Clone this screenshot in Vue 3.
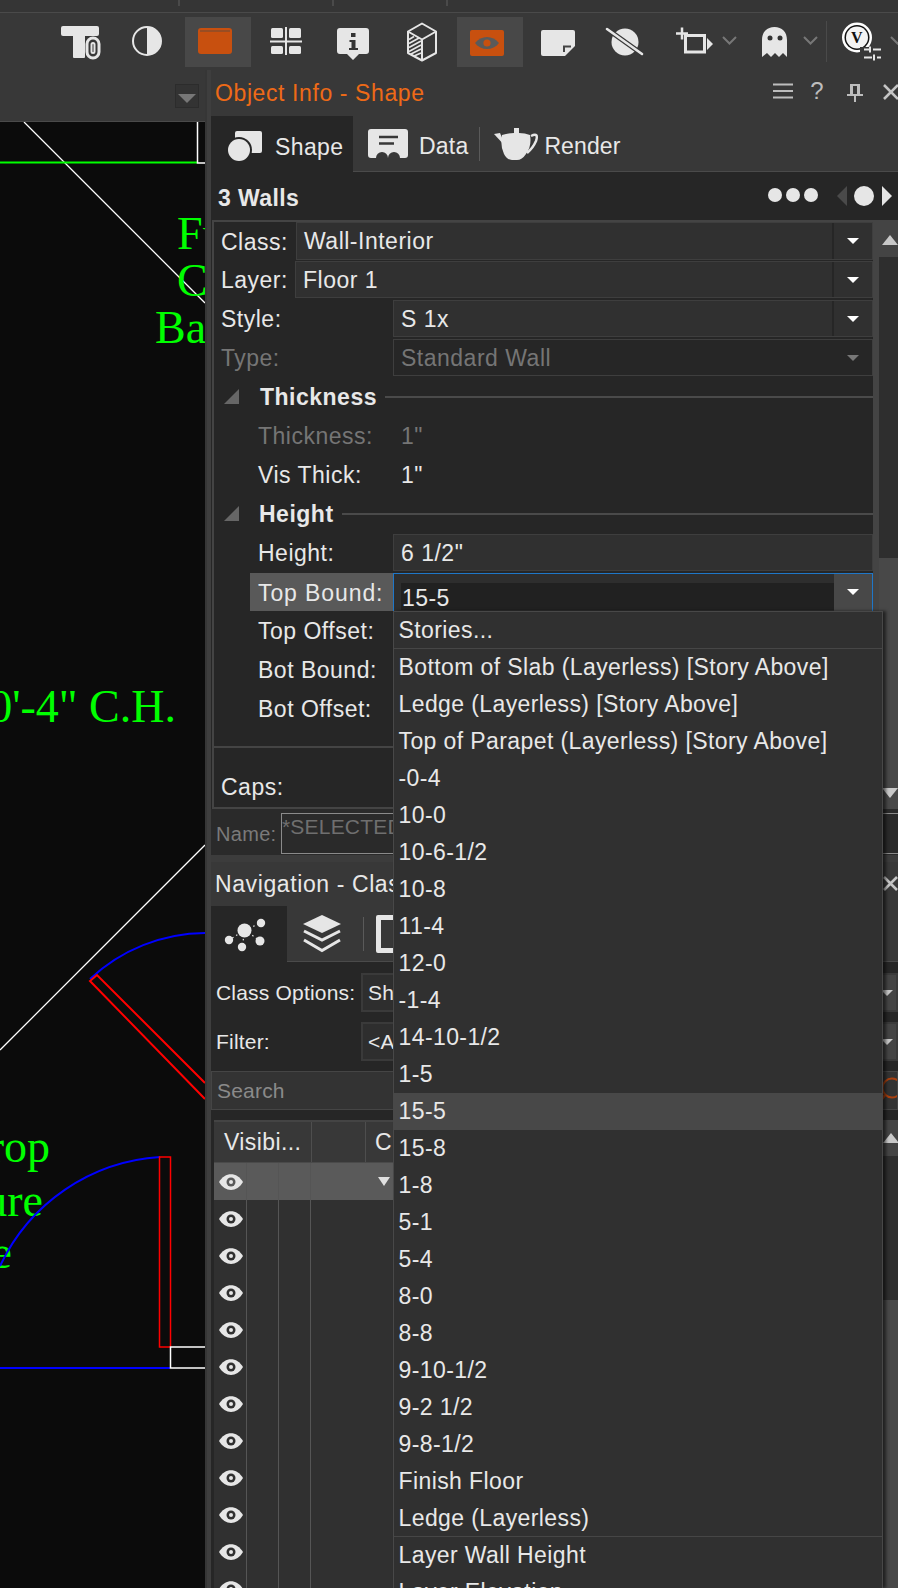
<template>
  <div class="app">
    <div class="top-strip">
      <i style="left: 178px"></i>
      <i style="left: 332px"></i>
      <i style="left: 446px"></i>
    </div>

    <div class="toolbar">
      <div class="tool">
        <svg viewBox="49 17 66 50">
          <rect x="61" y="26" width="38" height="10" rx="2" fill="#e6e6e6" />
          <rect x="73" y="34" width="12" height="24" rx="1" fill="#e6e6e6" />
          <rect x="87" y="38" width="12" height="20" rx="6" fill="#383838" stroke="#e6e6e6" stroke-width="3" />
          <rect x="91.5" y="43" width="3" height="10" rx="1.5" fill="none" stroke="#e6e6e6" stroke-width="2" />
        </svg>
      </div>
      <div class="tool">
        <svg viewBox="117 17 66 50">
          <circle cx="147" cy="41" r="14" fill="none" stroke="#e6e6e6" stroke-width="2" />
          <path d="M147 27A14 14 0 0 1 147 55Z" fill="#e6e6e6" />
        </svg>
      </div>
      <div class="tool on">
        <svg viewBox="185 17 66 50">
          <rect x="198" y="28" width="34" height="26" rx="3" fill="#c8500f" />
          <path d="M200 31H230" stroke="#6b4a38" stroke-width="1" />
        </svg>
      </div>
      <div class="tool">
        <svg viewBox="253 17 66 50">
          <rect x="271" y="28" width="12" height="10" rx="1.5" fill="#e6e6e6" />
          <rect x="289" y="28" width="12" height="10" rx="1.5" fill="#e6e6e6" />
          <rect x="271" y="46" width="12" height="8" rx="1.5" fill="#e6e6e6" />
          <rect x="289" y="46" width="12" height="8" rx="1.5" fill="#e6e6e6" />
          <path d="M270 41.5H302M286 27V55" stroke="#e6e6e6" stroke-width="2" />
        </svg>
      </div>
      <div class="tool">
        <svg viewBox="321 17 66 50">
          <path d="M340 28H366a3 3 0 0 1 3 3V51a3 3 0 0 1-3 3H359L353 60 347 54H340a3 3 0 0 1-3-3V31a3 3 0 0 1 3-3Z" fill="#e6e6e6" />
          <rect x="351" y="33" width="4.5" height="4" fill="#333" />
          <path d="M349.500 40H355.500V48H358V50H349V48H351.500V42H349.500Z" fill="#333" />
        </svg>
      </div>
      <div class="tool">
        <svg viewBox="389 17 66 50">
          <path d="M422 23.500L436 31.500V53L422 60.500 408 53V31.500ZM408 31.500L422 39.500 436 31.500M422 39.500V60.500" fill="none" stroke="#e6e6e6" stroke-width="2" stroke-linejoin="round" />
          <path d="M409 39.500L414 36.500M409 43.500L419 38M409 47.500L421 41M409 51.500L421 45M411 54L421 49M414 56L421 53" stroke="#e6e6e6" stroke-width="1.700" />
        </svg>
      </div>
      <div class="tool on">
        <svg viewBox="457 17 66 50">
          <rect x="470" y="30" width="34" height="26" rx="2" fill="#c8500f" />
          <path d="M475 43C481 35 493 35 499 43 493 51 481 51 475 43Z" fill="#5a5a5a" />
          <circle cx="487" cy="43" r="3.600" fill="#c8500f" />
        </svg>
      </div>
      <div class="tool">
        <svg viewBox="525 17 66 50">
          <path d="M543 30H573a2 2 0 0 1 2 2V46L565 56H543a2 2 0 0 1-2-2V32a2 2 0 0 1 2-2Z" fill="#e6e6e6" />
          <path d="M564 52V46.500H571" fill="none" stroke="#444" stroke-width="2" />
        </svg>
      </div>
      <div class="tool">
        <svg viewBox="593 17 66 50">
          <circle cx="625" cy="42" r="13.500" fill="#e6e6e6" />
          <path d="M607 29L642 54" stroke="#383838" stroke-width="5" />
          <path d="M607 29L642 54" stroke="#e6e6e6" stroke-width="2.600" stroke-linecap="round" />
        </svg>
      </div>
      <div class="tool wide-a">
        <svg viewBox="661 17 84 50">
          <path d="M676 33.500H688M682 27.500V39.500" stroke="#e6e6e6" stroke-width="2.500" />
          <rect x="685.500" y="35.500" width="19" height="16.500" fill="none" stroke="#e6e6e6" stroke-width="3" />
          <path d="M707 38L713 44 707 50Z" fill="#e6e6e6" />
          <path d="M723 37L729.500 43.500 736 37" fill="none" stroke="#777" stroke-width="2" />
        </svg>
      </div>
      <div class="tool wide-b">
        <svg viewBox="745 17 81 50">
          <path d="M762 57V40C762 32 767 27 774.500 27S787 32 787 40V57L783 53 779 57 775 53 771 57 767 53Z" fill="#e6e6e6" />
          <circle cx="770" cy="38" r="2.500" fill="#333" />
          <circle cx="780" cy="38" r="2.500" fill="#333" />
          <path d="M804 37L810.500 43.500 817 37" fill="none" stroke="#777" stroke-width="2" />
        </svg>
      </div>
      <div class="tool-sep"></div>
      <div class="tool wide-c">
        <svg viewBox="827 17 71 50">
          <circle cx="857" cy="37.500" r="15" fill="#fff" />
          <circle cx="857" cy="37.500" r="12.500" fill="#111" />
          <circle cx="857" cy="37.500" r="11" fill="#f4f4f4" />
          <text x="857" y="43" text-anchor="middle" class="logo-v">V</text>
          <path d="M860 49.500H882M860 57.500H882" stroke="#383838" stroke-width="5" />
          <path d="M864 49.500H869M873 49.500H881M864 57.500H872M877 57.500H881M870 46.500V52.500M874 54.500V60.500" stroke="#e6e6e6" stroke-width="2" />
          <path d="M891 37L897.500 43.500 904 37" fill="none" stroke="#777" stroke-width="2" />
        </svg>
      </div>
    </div>

    <div class="main">
      <div class="left">
        <div class="left-head">
          <div class="head-btn"><span class="head-tri"></span></div>
        </div>
        <div class="canvas">
          <svg class="drawing" viewBox="0 122 205 1466">
            <path d="M24 122L205 303M205 845L0 1050" stroke="#fff" stroke-width="1.300" fill="none" />
            <path d="M0 162.500H197" stroke="#00ff00" stroke-width="2" />
            <path d="M197.500 122V163H205" stroke="#fff" stroke-width="1.500" fill="none" />
            <text x="177" y="249" class="cad">Fu</text>
            <text x="177" y="296" class="cad">Cl</text>
            <text x="155" y="343" class="cad">Ba</text>
            <text x="176" y="722" text-anchor="end" class="cad">10'-4" C.H.</text>
            <text x="50" y="1162" text-anchor="end" class="cad">rop</text>
            <text x="43" y="1216" text-anchor="end" class="cad">ure</text>
            <text x="12" y="1268" text-anchor="end" class="cad">e</text>
            <path d="M90 979A170 170 0 0 1 205 933" stroke="#0000ff" stroke-width="2" fill="none" />
            <path d="M205 1099L90 981 97 975 205 1083" stroke="#ff0000" stroke-width="2" fill="none" />
            <path d="M0 1266A190 190 0 0 1 160 1157" stroke="#0000ff" stroke-width="2" fill="none" />
            <rect x="159.500" y="1157" width="11" height="190" stroke="#ff0000" stroke-width="1.500" fill="none" />
            <path d="M0 1368H170" stroke="#0000ff" stroke-width="2" />
            <path d="M205 1347H170.500V1368H205" stroke="#fff" stroke-width="1.500" fill="none" />
          </svg>
        </div>
      </div>

      <div class="splitter"></div>

      <div class="right">
        <div class="titlebar">
          <span class="title orange">Object Info - Shape</span>
          <svg class="win-icons" viewBox="760 70 138 46">
            <path d="M773 84.500H793M773 91H793M773 97.500H793" stroke="#bdbdbd" stroke-width="1.800" />
            <text x="817" y="99" text-anchor="middle" class="help">?</text>
            <path d="M850 84H860V94H863V96H847V94H850ZM853 86V94H857V86ZM854 96H856V102H854Z" fill="#bdbdbd" fill-rule="evenodd" />
            <path d="M884 85L898 99M898 85L884 99" stroke="#c4c4c4" stroke-width="2.600" />
          </svg>
        </div>

        <div class="tabs">
          <div class="tab active shape-tab">
            <svg width="40" height="36" viewBox="224 125 40 36">
              <rect x="235" y="130" width="27" height="22" rx="2" fill="#e6e6e6" />
              <circle cx="239" cy="149" r="13" fill="#262626" />
              <circle cx="239" cy="149" r="11" fill="#e6e6e6" />
            </svg>
            <span>Shape</span>
          </div>
          <div class="tab data-tab">
            <svg width="42" height="32" viewBox="367 129 42 32">
              <path d="M371 130H405a3 3 0 0 1 3 3V156a3 3 0 0 1-3 3H400a6 6 0 0 0-12 0H388a6 6 0 0 0-12 0H371a3 3 0 0 1-3-3V133a3 3 0 0 1 3-3Z" fill="#e6e6e6" />
              <path d="M379 138H398M379 144.500H394" stroke="#383838" stroke-width="2.500" />
            </svg>
            <span>Data</span>
          </div>
          <div class="tab-sep"></div>
          <div class="tab render-tab">
            <svg width="46" height="36" viewBox="492 126 46 36">
              <path d="M493 134L499 133 505 147Z" fill="#e6e6e6" />
              <path d="M501 135Q507 133 513 133V128H518V133Q524 133 529 135Q531 146 525 154Q521 160 516 160H511Q506 160 503 154Q499 146 501 135Z" fill="#e6e6e6" />
              <path d="M530 136Q538 132 535 141Q532 148 526 153" fill="none" stroke="#e6e6e6" stroke-width="2.500" />
            </svg>
            <span>Render</span>
          </div>
        </div>

        <div class="selection">
          <b>3 Walls</b>
          <svg viewBox="760 175 138 40" class="sel-icons">
            <circle cx="775" cy="195" r="7" fill="#e6e6e6" />
            <circle cx="793" cy="195" r="7" fill="#e6e6e6" />
            <circle cx="811" cy="195" r="7" fill="#e6e6e6" />
            <path d="M847 186V206L837 196Z" fill="#4a4a4a" />
            <circle cx="864" cy="196" r="10" fill="#e6e6e6" />
            <path d="M882 186L892 196 882 206Z" fill="#e6e6e6" />
          </svg>
        </div>

        <div class="info">
          <div class="fields">
            <div class="row first">
              <span class="lab lab-class">Class:</span>
              <div class="field"><span class="field-text">Wall-Interior</span><span class="drop"><span class="tri"></span></span></div>
            </div>
            <div class="row">
              <span class="lab lab-layer">Layer:</span>
              <div class="field"><span class="field-text">Floor 1</span><span class="drop"><span class="tri"></span></span></div>
            </div>
            <div class="row">
              <span class="lab lab-wide">Style:</span>
              <div class="field"><span class="field-text">S 1x</span><span class="drop"><span class="tri"></span></span></div>
            </div>
            <div class="row">
              <span class="lab lab-wide muted">Type:</span>
              <div class="field off"><span class="field-text muted">Standard Wall</span><span class="drop"><span class="tri dim"></span></span></div>
            </div>

            <div class="row section">
              <svg class="corner" viewBox="0 0 15 15"><path d="M15 0V15H0Z" fill="#666" /></svg>
              <b>Thickness</b>
              <i></i>
            </div>
            <div class="row sub">
              <span class="lab lab-sub muted">Thickness:</span>
              <span class="value muted">1"</span>
            </div>
            <div class="row sub">
              <span class="lab lab-sub">Vis Thick:</span>
              <span class="value">1"</span>
            </div>

            <div class="row section">
              <svg class="corner" viewBox="0 0 15 15"><path d="M15 0V15H0Z" fill="#666" /></svg>
              <b class="tight">Height</b>
              <i></i>
            </div>
            <div class="row sub">
              <span class="lab lab-sub">Height:</span>
              <div class="field"><span class="field-text">6 1/2"</span></div>
            </div>
            <div class="row sub bound">
              <span class="lab lab-hi">Top Bound:</span>
              <div class="combo">
                <div class="combo-in">15-5</div>
                <span class="combo-btn"><span class="tri"></span></span>
              </div>
            </div>
            <div class="row sub"><span class="lab lab-sub">Top Offset:</span></div>
            <div class="row sub"><span class="lab lab-sub">Bot Bound:</span></div>
            <div class="row sub"><span class="lab lab-sub">Bot Offset:</span></div>

            <div class="caps">
              <span class="lab">Caps:</span>
            </div>
          </div>
          <div class="scroll">
            <div class="scroll-btn"><span class="arrow up"></span></div>
            <div class="scroll-track"></div>
            <div class="scroll-thumb"><span class="arrow down"></span></div>
          </div>
        </div>

        <div class="name-row">
          <span class="name-lab">Name:</span>
          <div class="name-box">*SELECTED</div>
        </div>
        <div class="gap-strip"></div>

        <div class="titlebar nav-title">
          <span class="title">Navigation - Classes</span>
          <svg class="nav-x" viewBox="0 0 15 15"><path d="M1 1L14 14M14 1L1 14" stroke="#c4c4c4" stroke-width="2.600" /></svg>
        </div>

        <div class="tabs nav-tabs">
          <div class="tab active net-tab">
            <svg width="50" height="44" viewBox="220 912 50 44">
              <path d="M245 930L261 923M245 930L229 940M245 930L260 941M245 930L242 947" stroke="#e6e6e6" stroke-width="1.200" stroke-dasharray="1.500 3" />
              <circle cx="244.500" cy="930.500" r="7" fill="#e6e6e6" />
              <circle cx="261" cy="923" r="4.200" fill="#e6e6e6" />
              <circle cx="229" cy="940" r="4.200" fill="#e6e6e6" />
              <circle cx="260" cy="941" r="4.500" fill="#e6e6e6" />
              <circle cx="242" cy="947" r="4.200" fill="#e6e6e6" />
            </svg>
          </div>
          <div class="tab layers-tab">
            <svg width="40" height="40" viewBox="302 915 40 40">
              <path d="M322 916L341 925 322 934 303 925Z" fill="#e6e6e6" />
              <path d="M304 932L322 941 340 932" fill="none" stroke="#e6e6e6" stroke-width="3" />
              <path d="M304 941L322 951.500 340 941" fill="none" stroke="#e6e6e6" stroke-width="3" />
            </svg>
          </div>
          <div class="tab-sep nav-sep"></div>
          <div class="box-icon"></div>
        </div>

        <div class="options">
          <div class="opt-row">
            <span class="opt-lab">Class Options:</span>
            <div class="opt-field"><span>Show/Snap/Modify Others</span><span class="opt-btn"><span class="tri soft"></span></span></div>
          </div>
          <div class="opt-row">
            <span class="opt-lab">Filter:</span>
            <div class="opt-field"><span>&lt;All Classes&gt;</span><span class="opt-btn"><span class="tri soft"></span></span></div>
          </div>
        </div>

        <div class="search">
          <span>Search</span>
          <svg class="lens" viewBox="0 0 16 26">
            <circle cx="11" cy="11" r="9.500" fill="none" stroke="#a8400f" stroke-width="2" />
            <path d="M4 18L1 22" stroke="#a8400f" stroke-width="2.500" />
          </svg>
        </div>

        <div class="list">
          <div class="list-main">
            <div class="list-head">
              <span class="col-vis">Visibi...</span>
              <span class="col-mid"></span>
              <span class="col-name">C</span>
            </div>
            <div v-for="n in 12" :key="n" class="list-row" :class="{ picked: n === 1 }">
              <span class="cell eye-cell">
                <svg width="24" height="16" viewBox="0 0 24 16">
                  <path d="M0 8C6-2.500 18-2.500 24 8 18 18.500 6 18.500 0 8Z" fill="#e6e6e6" />
                  <circle cx="12" cy="8" r="4.500" :fill="n === 1 ? '#5a5a5a' : '#303030'" />
                  <circle cx="12" cy="8" r="2" fill="#e6e6e6" />
                </svg>
              </span>
              <span class="cell"></span>
              <span class="cell"></span>
              <span class="cell last"><span v-if="n === 1" class="tri row-tri"></span></span>
            </div>
          </div>
          <div class="list-scroll">
            <div class="list-up"><span class="arrow up"></span></div>
            <div class="list-track"></div>
            <div class="list-thumb"></div>
          </div>
        </div>
      </div>
    </div>

    <div class="menu">
      <div class="menu-first">Stories...</div>
      <div
        v-for="item in menuItems"
        :key="item"
        class="menu-item"
        :class="{ current: item === '15-5', ruled: item === 'Ledge (Layerless)' }"
      >{{ item }}</div>
    </div>
  </div>
</template>

<script setup>
const menuItems = [
  'Bottom of Slab (Layerless) [Story Above]',
  'Ledge (Layerless) [Story Above]',
  'Top of Parapet (Layerless) [Story Above]',
  '-0-4',
  '10-0',
  '10-6-1/2',
  '10-8',
  '11-4',
  '12-0',
  '-1-4',
  '14-10-1/2',
  '1-5',
  '15-5',
  '15-8',
  '1-8',
  '5-1',
  '5-4',
  '8-0',
  '8-8',
  '9-10-1/2',
  '9-2 1/2',
  '9-8-1/2',
  'Finish Floor',
  'Ledge (Layerless)',
  'Layer Wall Height',
  'Layer Elevation'
]
</script>

<style>
html,
body {
  margin: 0;
  background: #383838;
}
</style>

<style scoped>
.app {
  position: relative;
  width: 898px;
  height: 1588px;
  overflow: hidden;
  background: #383838;
  color: #e8e8e8;
  font-family: "Liberation Sans", Arial, sans-serif;
  font-size: 23px;
  letter-spacing: 0.4px;
}

.top-strip {
  position: relative;
  height: 12px;
  background: #353535;
  border-bottom: 1px solid #4a4a4a;
}

.top-strip i {
  position: absolute;
  top: 0;
  width: 2px;
  height: 6px;
  background: #4a4a4a;
}

.toolbar {
  display: flex;
  height: 57px;
  padding: 4px 0 0 49px;
  box-sizing: border-box;
  gap: 2px;
}

.tool {
  width: 66px;
  height: 50px;
  flex: none;
}

.tool.on {
  background: #484848;
}

.tool svg {
  display: block;
  width: 100%;
  height: 100%;
}

.tool.wide-a {
  width: 84px;
}

.tool.wide-b {
  width: 81px;
  margin-left: -2px;
}

.tool.wide-c {
  width: 71px;
  margin-left: -2px;
}

.tool-sep {
  width: 1px;
  height: 41px;
  margin: 4px 0 0 -2px;
  background: #4a4a4a;
  flex: none;
}

.logo-v {
  font-family: "Liberation Serif", serif;
  font-size: 16px;
  font-weight: 700;
  fill: #111;
}

.main {
  display: flex;
  height: 1518px;
}

.left {
  width: 205px;
  display: flex;
  flex-direction: column;
  flex: none;
}

.left-head {
  height: 52px;
  padding: 14px 6px 0 0;
  box-sizing: border-box;
  border-bottom: 1px solid #4a4a4a;
  display: flex;
  justify-content: flex-end;
  flex: none;
}

.head-btn {
  width: 24px;
  height: 24px;
  box-sizing: border-box;
  background: #333;
  border: 1px solid #2c2c2c;
  display: flex;
  align-items: flex-end;
  justify-content: center;
  padding-bottom: 4px;
}

.head-tri {
  width: 0;
  height: 0;
  border-left: 9px solid transparent;
  border-right: 9px solid transparent;
  border-top: 9px solid #777;
}

.canvas {
  flex: 1;
  background: #0b0b0b;
}

.drawing {
  display: block;
  width: 205px;
  height: 1466px;
}

.cad {
  font-family: "Liberation Serif", serif;
  font-size: 46px;
  fill: #00ff00;
  letter-spacing: 0;
}

.help {
  font-size: 24px;
  fill: #bdbdbd;
  letter-spacing: 0;
}

.splitter {
  width: 6px;
  flex: none;
  background: #3e3e3e;
  border-left: 2px solid #363636;
  box-sizing: border-box;
}

.right {
  width: 687px;
  flex: none;
  display: flex;
  flex-direction: column;
  background: #262626;
}

.titlebar {
  position: relative;
  height: 46px;
  background: #383838;
  display: flex;
  align-items: center;
  padding-left: 4px;
  flex: none;
}

.title {
  letter-spacing: 0.6px;
  white-space: nowrap;
}

.orange {
  color: #ee6a17;
}

.win-icons {
  position: absolute;
  right: 0;
  top: 0;
  width: 138px;
  height: 46px;
}

.tabs {
  display: flex;
  align-items: center;
  height: 56px;
  background: #383838;
  border-bottom: 1px solid #4a4a4a;
  box-sizing: border-box;
  flex: none;
}

.tab {
  display: flex;
  align-items: center;
  height: 100%;
  flex: none;
}

.tab.active {
  background: #262626;
  height: 56px;
  align-self: flex-start;
}

.tab svg {
  display: block;
  flex: none;
}

.tab span {
  padding-top: 6px;
}

.shape-tab {
  width: 142px;
  padding-left: 13px;
  box-sizing: border-box;
  gap: 11px;
}

.data-tab {
  margin-left: 14px;
  gap: 10px;
  letter-spacing: 0.2px;
}

.tab-sep {
  width: 1px;
  height: 34px;
  background: #5a5a5a;
  margin-left: 11px;
  flex: none;
}

.render-tab {
  margin-left: 13px;
  gap: 5px;
  letter-spacing: 0.1px;
}

.selection {
  height: 48px;
  display: flex;
  align-items: center;
  padding: 5px 0 0 7px;
  box-sizing: border-box;
  position: relative;
  flex: none;
}

.sel-icons {
  position: absolute;
  right: 0;
  top: 3px;
  width: 138px;
  height: 40px;
}

.info {
  display: flex;
  height: 589px;
  flex: none;
}

.fields {
  width: 661px;
  margin-left: 1px;
  border-top: 2px solid #444;
  border-left: 2px solid #444;
  border-bottom: 2px solid #444;
  box-sizing: border-box;
  display: flex;
  flex-direction: column;
  flex: none;
}

.row {
  height: 39px;
  display: flex;
  align-items: center;
  flex: none;
}

.row.first {
  height: 38px;
}

.lab {
  flex: none;
  white-space: nowrap;
  padding-top: 2px;
  letter-spacing: 0.5px;
}

.lab-class {
  width: 82px;
  padding-left: 7px;
  box-sizing: border-box;
}

.lab-layer {
  width: 81px;
  padding-left: 7px;
  box-sizing: border-box;
}

.lab-wide {
  width: 179px;
  padding-left: 7px;
  box-sizing: border-box;
}

.lab-sub {
  width: 179px;
  padding-left: 44px;
  box-sizing: border-box;
}

.lab-hi {
  width: 143px;
  height: 38px;
  line-height: 36px;
  margin-left: 36px;
  padding-left: 8px;
  box-sizing: border-box;
  background: #595959;
  letter-spacing: 0.9px;
}

.muted {
  color: #757575;
}

.field {
  flex: 1;
  height: 37px;
  min-width: 0;
  box-sizing: border-box;
  display: flex;
  align-items: center;
  background: #303030;
  border: 1px solid #3e3e3e;
}

.row.first .field {
  height: 38px;
}

.field.off {
  background: #262626;
}

.field-text {
  flex: 1;
  padding: 1px 0 0 7px;
  letter-spacing: 0.5px;
}

.drop {
  width: 38px;
  height: 100%;
  border-left: 2px solid #262626;
  display: flex;
  align-items: center;
  justify-content: center;
  flex: none;
}

.field.off .drop {
  border-left: 0;
}

.tri {
  display: inline-block;
  width: 0;
  height: 0;
  border-left: 6px solid transparent;
  border-right: 6px solid transparent;
  border-top: 6px solid #fff;
}

.tri.dim {
  border-top-color: #777;
}

.tri.soft {
  border-top-color: #c8c8c8;
}

.section b {
  margin-left: 21px;
  letter-spacing: 0.5px;
  padding-top: 2px;
}

.section b.tight {
  margin-left: 20px;
}

.corner {
  width: 15px;
  height: 15px;
  margin-left: 10px;
  flex: none;
}

.section i {
  flex: 1;
  height: 2px;
  margin-left: 8px;
  background: #4a4a4a;
}

.value {
  padding: 2px 0 0 8px;
}

.combo {
  flex: 1;
  height: 38px;
  box-sizing: border-box;
  border: 1px solid #1f77c8;
  border-bottom: 0;
  background: #2e2e2e;
  display: flex;
  padding-left: 7px;
}

.combo-in {
  flex: 1;
  margin-top: 9px;
  height: 27px;
  line-height: 31px;
  background: #212121;
  padding-left: 1px;
  overflow: hidden;
}

.combo-btn {
  width: 38px;
  background: #484848;
  display: flex;
  align-items: center;
  justify-content: center;
  flex: none;
}

.caps {
  margin-top: auto;
  height: 61px;
  border-top: 2px solid #444;
  box-sizing: border-box;
  padding: 26px 0 0 7px;
}

.scroll {
  flex: 1;
  background: #444;
  display: flex;
  flex-direction: column;
  padding-top: 2px;
  box-sizing: border-box;
}

.scroll-btn {
  height: 35px;
  display: flex;
  justify-content: center;
  align-items: center;
  padding-left: 9px;
  flex: none;
}

.scroll-track {
  height: 301px;
  margin-left: 6px;
  background: #2e2e2e;
  flex: none;
}

.scroll-thumb {
  flex: 1;
  margin-left: 6px;
  background: #484848;
  display: flex;
  justify-content: center;
  align-items: flex-end;
  padding: 0 0 11px 2px;
}

.arrow {
  display: inline-block;
  width: 0;
  height: 0;
  border-left: 8px solid transparent;
  border-right: 8px solid transparent;
}

.arrow.up {
  border-bottom: 10px solid #c8c8c8;
}

.arrow.down {
  border-top: 10px solid #c8c8c8;
}

.name-row {
  height: 46px;
  display: flex;
  align-items: flex-start;
  background: #2a2a2a;
  padding: 4px 0 0 5px;
  box-sizing: border-box;
  flex: none;
}

.name-lab {
  width: 65px;
  flex: none;
  font-size: 20px;
  letter-spacing: 0.3px;
  color: #7a7a7a;
  padding-top: 10px;
}

.name-box {
  flex: 1;
  height: 41px;
  box-sizing: border-box;
  border: 1px solid #8a8a8a;
  border-right: 0;
  color: #6f6f6f;
  font-size: 21px;
  line-height: 26px;
  letter-spacing: 0.2px;
}

.gap-strip {
  height: 7px;
  background: #3c3c3c;
  flex: none;
}

.nav-title {
  height: 44px;
}

.nav-x {
  position: absolute;
  right: 0;
  top: 14px;
  width: 15px;
  height: 15px;
}

.nav-tabs {
  position: relative;
}

.net-tab {
  width: 76px;
  padding-left: 9px;
  box-sizing: border-box;
}

.layers-tab {
  margin-left: 15px;
}

.nav-sep {
  margin-left: 21px;
}

.box-icon {
  width: 40px;
  height: 38px;
  margin-left: 12px;
  box-sizing: border-box;
  border: 5px solid #e6e6e6;
  border-radius: 2px;
  flex: none;
}

.options {
  display: flex;
  flex-direction: column;
  gap: 10px;
  padding-top: 11px;
  height: 109px;
  box-sizing: border-box;
  flex: none;
}

.opt-row {
  display: flex;
  align-items: center;
  height: 39px;
  padding-left: 5px;
  font-size: 21px;
  letter-spacing: 0.2px;
}

.opt-lab {
  width: 145px;
  flex: none;
}

.opt-field {
  flex: 1;
  height: 39px;
  box-sizing: border-box;
  border: 2px solid #3a3a3a;
  background: #2e2e2e;
  display: flex;
  align-items: center;
  justify-content: space-between;
  padding-left: 5px;
}

.opt-btn {
  width: 28px;
  height: 100%;
  background: #444;
  display: flex;
  align-items: center;
  justify-content: center;
  padding-left: 10px;
  box-sizing: border-box;
}

.search {
  position: relative;
  height: 39px;
  box-sizing: border-box;
  background: #333;
  border: 1px solid #454545;
  display: flex;
  align-items: center;
  padding-left: 5px;
  font-size: 21px;
  letter-spacing: 0.2px;
  color: #8a8a8a;
  flex: none;
}

.lens {
  position: absolute;
  right: 0;
  top: 5px;
  width: 16px;
  height: 26px;
}

.list {
  display: flex;
  flex: 1;
  margin-top: 10px;
  margin-left: 3px;
  min-height: 0;
}

.list-main {
  flex: 1;
  min-width: 0;
}

.list-head {
  display: flex;
  height: 43px;
  box-sizing: border-box;
  background: #383838;
  border-top: 2px solid #444;
  border-bottom: 1px solid #4a4a4a;
  align-items: stretch;
}

.list-head span {
  line-height: 41px;
  box-sizing: border-box;
}

.col-vis {
  width: 98px;
  padding-left: 10px;
  border-right: 1px solid #4e4e4e;
}

.col-mid {
  width: 54px;
  border-right: 1px solid #4e4e4e;
}

.col-name {
  padding-left: 9px;
}

.list-row {
  display: flex;
  height: 37px;
  background: #303030;
}

.list-row.picked {
  background: #5a5a5a;
}

.cell {
  width: 32px;
  flex: none;
  box-sizing: border-box;
  border-right: 1px solid #555;
  display: flex;
  align-items: center;
}

.eye-cell {
  width: 33px;
  padding-left: 5px;
}

.cell.last {
  flex: 1;
  border-right: 0;
  padding-left: 67px;
}

.row-tri {
  border-top-color: #e0e0e0;
  border-top-width: 9px;
}

.list-scroll {
  width: 25px;
  flex: none;
  display: flex;
  flex-direction: column;
  background: #444;
}

.list-up {
  height: 36px;
  display: flex;
  align-items: center;
  padding-left: 10px;
  box-sizing: border-box;
  flex: none;
}

.list-track {
  height: 144px;
  background: #2e2e2e;
  flex: none;
}

.list-thumb {
  flex: 1;
  margin-left: 4px;
  background: #484848;
}

.menu {
  position: absolute;
  left: 393px;
  top: 611px;
  bottom: 0;
  width: 490px;
  box-sizing: border-box;
  overflow: hidden;
  background: #303030;
  border: 1px solid #484848;
  border-bottom: 0;
  box-shadow: 3px 0 3px rgba(0, 0, 0, 0.55);
}

.menu-first,
.menu-item {
  height: 37px;
  line-height: 37px;
  padding-left: 4.5px;
  white-space: nowrap;
}

.menu-first {
  box-sizing: border-box;
  border-bottom: 1px solid #464646;
}

.menu-item.current {
  background: #484848;
}

.menu-item.ruled {
  box-sizing: border-box;
  border-bottom: 1px solid #464646;
}
</style>
